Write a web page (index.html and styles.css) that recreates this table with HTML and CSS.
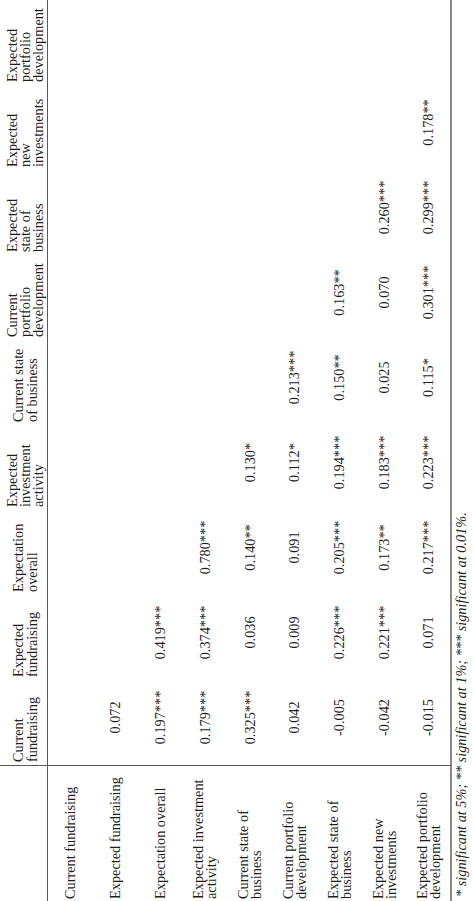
FILE: index.html
```html
<!DOCTYPE html>
<html>
<head>
<meta charset="utf-8">
<link rel="stylesheet" href="styles.css">
</head>
<body>
<div class="page">
  <div class="sheet">
    <div class="grid">
      <div class="cell corner"></div>
      <div class="cell head">Current fundraising</div>
      <div class="cell head">Expected fundraising</div>
      <div class="cell head">Expectation overall</div>
      <div class="cell head">Expected investment activity</div>
      <div class="cell head">Current state of business</div>
      <div class="cell head">Current portfolio development</div>
      <div class="cell head">Expected state of business</div>
      <div class="cell head">Expected new investments</div>
      <div class="cell head">Expected portfolio development</div>

      <div class="cell label">Current fundraising</div>
      <div class="cell val"></div><div class="cell val"></div><div class="cell val"></div><div class="cell val"></div><div class="cell val"></div><div class="cell val"></div><div class="cell val"></div><div class="cell val"></div><div class="cell val"></div>

      <div class="cell label">Expected fundraising</div>
      <div class="cell val">0.072</div><div class="cell val"></div><div class="cell val"></div><div class="cell val"></div><div class="cell val"></div><div class="cell val"></div><div class="cell val"></div><div class="cell val"></div><div class="cell val"></div>

      <div class="cell label">Expectation overall</div>
      <div class="cell val">0.197***</div><div class="cell val">0.419***</div><div class="cell val"></div><div class="cell val"></div><div class="cell val"></div><div class="cell val"></div><div class="cell val"></div><div class="cell val"></div><div class="cell val"></div>

      <div class="cell label">Expected investment activity</div>
      <div class="cell val">0.179***</div><div class="cell val">0.374***</div><div class="cell val">0.780***</div><div class="cell val"></div><div class="cell val"></div><div class="cell val"></div><div class="cell val"></div><div class="cell val"></div><div class="cell val"></div>

      <div class="cell label">Current state of business</div>
      <div class="cell val">0.325***</div><div class="cell val">0.036</div><div class="cell val">0.140**</div><div class="cell val">0.130*</div><div class="cell val"></div><div class="cell val"></div><div class="cell val"></div><div class="cell val"></div><div class="cell val"></div>

      <div class="cell label">Current portfolio development</div>
      <div class="cell val">0.042</div><div class="cell val">0.009</div><div class="cell val">0.091</div><div class="cell val">0.112*</div><div class="cell val">0.213***</div><div class="cell val"></div><div class="cell val"></div><div class="cell val"></div><div class="cell val"></div>

      <div class="cell label">Expected state of business</div>
      <div class="cell val">-0.005</div><div class="cell val">0.226***</div><div class="cell val">0.205***</div><div class="cell val">0.194***</div><div class="cell val">0.150**</div><div class="cell val">0.163**</div><div class="cell val"></div><div class="cell val"></div><div class="cell val"></div>

      <div class="cell label">Expected new investments</div>
      <div class="cell val">-0.042</div><div class="cell val">0.221***</div><div class="cell val">0.173**</div><div class="cell val">0.183***</div><div class="cell val">0.025</div><div class="cell val">0.070</div><div class="cell val">0.260***</div><div class="cell val"></div><div class="cell val"></div>

      <div class="cell label last">Expected portfolio development</div>
      <div class="cell val last">-0.015</div><div class="cell val last">0.071</div><div class="cell val last">0.217***</div><div class="cell val last">0.223***</div><div class="cell val last">0.115*</div><div class="cell val last">0.301***</div><div class="cell val last">0.299***</div><div class="cell val last">0.178**</div><div class="cell val last"></div>
    </div>
    <p class="note">* significant at 5%; ** significant at 1%; *** significant at 0.01%.</p>
  </div>
</div>
</body>
</html>
```

FILE: styles.css
```css
html, body {
  margin: 0;
  padding: 0;
  background: #ffffff;
}

.page {
  width: 474px;
  height: 901px;
  overflow: hidden;
  background: #ffffff;
}

.sheet {
  width: 901px;
  height: 474px;
  transform-origin: 0 0;
  transform: translateY(901px) rotate(-90deg);
  font-family: "Liberation Serif", "Times New Roman", serif;
  font-size: 14.3px;
  line-height: 13px;
  color: #1e1e1e;
}

.grid {
  display: grid;
  grid-template-columns: 136px repeat(9, 85px);
  grid-template-rows: 48px repeat(9, 44.9px);
}

.cell {
  box-sizing: border-box;
  display: flex;
  align-items: center;
  min-width: 0;
}

.corner {
  border-right: 1px solid #5a5a5a;
  border-bottom: 1px solid #5a5a5a;
}

.head {
  border-bottom: 1px solid #5a5a5a;
  padding: 4px 5px 0 3px;
  line-height: 13.3px;
  justify-content: flex-start;
  text-align: left;
}

.label {
  border-right: 1px solid #5a5a5a;
  padding: 0 4px 0 2px;
  text-align: left;
}

.val {
  justify-content: center;
  padding-left: 10px;
  white-space: nowrap;
}

.last {
  border-bottom: 2px solid #8a8a8a;
}

.note {
  margin: 3px 0 0 0;
  padding-left: 4px;
  font-style: italic;
  white-space: nowrap;
}
```
